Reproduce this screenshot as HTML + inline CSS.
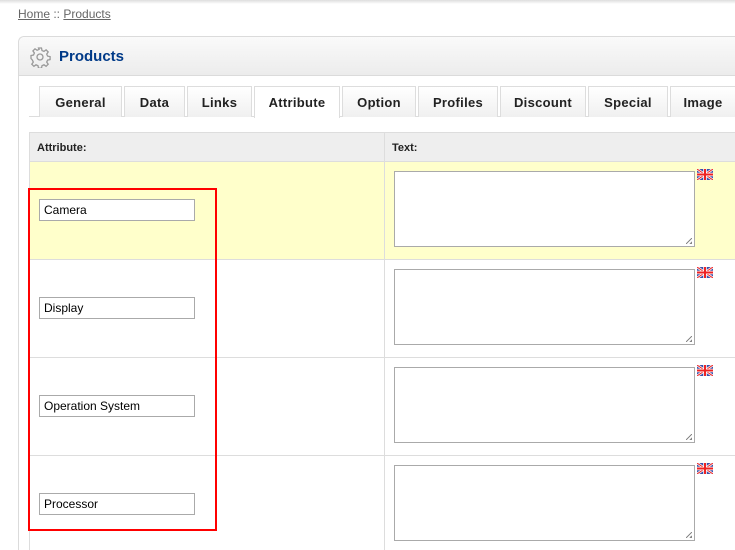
<!DOCTYPE html>
<html><head><meta charset="utf-8"><style>
*{box-sizing:border-box}
html{height:550px;overflow:hidden}
body{margin:0;width:735px;height:550px;overflow:hidden;background:#fff;font-family:"Liberation Sans",Arial,sans-serif;position:relative}
.a{position:absolute}
.bc{left:18px;top:7px;font-size:12px;color:#666}
.bc u{color:#666}
.panel{left:18px;top:36px;width:717px;height:514px;border:1px solid #dbdbdb;border-right:none;border-bottom:none;border-radius:6px 0 0 0}
.head{left:19px;top:37px;width:716px;height:39px;background:linear-gradient(#fafafa,#ececec);border-bottom:1px solid #dbdbdb;border-radius:6px 0 0 0}
.title{left:59px;top:48px;font-size:15px;font-weight:bold;color:#003a88}
.tab{top:86px;height:31px;border:1px solid #ddd;border-bottom:none;background:linear-gradient(#fff,#f0f0f0);font-size:13px;font-weight:bold;color:#222;text-align:center;line-height:31px;letter-spacing:0.3px}
.tab.on{background:#fff;height:32px}
.tline{left:29px;top:116px;width:706px;height:1px;background:#ddd}
.th{left:29px;top:132px;width:706px;height:30px;background:#eee;border:1px solid #ddd;border-right:none;font-size:11px;font-weight:bold;color:#222}
.row{left:29px;width:706px;height:98px;border-left:1px solid #ddd;border-bottom:1px solid #ddd}
.vd{left:384px;top:132px;width:1px;height:418px;background:#ddd}
.in{left:39px;width:156px;height:22px;border:1px solid #aaa;background:#fff;font-size:12px;padding:3px 0 0 4px;color:#000}
.ta{left:394px;width:301px;height:76px;border:1px solid #aaa;background:#fff}
.ta:after{content:"";position:absolute;right:2px;bottom:2px;width:6px;height:6px;background:linear-gradient(135deg,transparent 45%,#888 45%,#888 55%,transparent 55%,transparent 75%,#888 75%)}
.flag{left:697px;width:16px;height:11px}
.red{left:28px;top:188px;width:189px;height:343px;border:2px solid #f00}
</style></head><body>
<div class="a bc"><u>Home</u> :: <u>Products</u></div>
<div class="a panel"></div>
<div class="a head"></div>
<svg class="a" style="left:29px;top:46px" width="22" height="22" viewBox="0 0 22 22"><g fill="none" stroke="#999" stroke-width="1.3"><circle cx="11" cy="11" r="3"/><path d="M9.5 2h3l.5 2.5 2 .9 2.1-1.5 2.1 2.1-1.5 2.1.9 2 2.5.5v3l-2.5.5-.9 2 1.5 2.1-2.1 2.1-2.1-1.5-2 .9-.5 2.5h-3l-.5-2.5-2-.9-2.1 1.5-2.1-2.1 1.5-2.1-.9-2L2 12.5v-3l2.5-.5.9-2-1.5-2.1 2.1-2.1 2.1 1.5 2-.9z"/></g></svg>
<div class="a title">Products</div>
<div class="a tline"></div>
<div class="a tab" style="left:39px;width:83px">General</div>
<div class="a tab" style="left:124px;width:61px">Data</div>
<div class="a tab" style="left:187px;width:65px">Links</div>
<div class="a tab on" style="left:254px;width:86px">Attribute</div>
<div class="a tab" style="left:342px;width:74px">Option</div>
<div class="a tab" style="left:418px;width:80px">Profiles</div>
<div class="a tab" style="left:500px;width:86px">Discount</div>
<div class="a tab" style="left:588px;width:80px">Special</div>
<div class="a tab" style="left:670px;width:65px;border-right:none">Image</div>
<div class="a th"><span class="a" style="left:7px;top:9px">Attribute:</span><span class="a" style="left:362px;top:9px">Text:</span></div>
<div class="a row" style="top:162px;background:#ffffcb"></div>
<div class="a row" style="top:260px"></div>
<div class="a row" style="top:358px"></div>
<div class="a row" style="top:456px;height:94px;border-bottom:none"></div>
<div class="a vd"></div>
<div class="a in" style="top:199px">Camera</div>
<div class="a in" style="top:297px">Display</div>
<div class="a in" style="top:395px">Operation System</div>
<div class="a in" style="top:493px">Processor</div>
<div class="a ta" style="top:171px"></div>
<div class="a ta" style="top:269px"></div>
<div class="a ta" style="top:367px"></div>
<div class="a ta" style="top:465px"></div>
<svg class="a flag" style="top:169px" viewBox="0 0 16 11"><rect width="16" height="11" fill="#3b4fa8"/><path d="M0 0L16 11M16 0L0 11" stroke="#fff" stroke-width="2.5"/><path d="M0 0L16 11M16 0L0 11" stroke="#e22" stroke-width="1"/><path d="M8 0v11M0 5.5h16" stroke="#fff" stroke-width="3.5"/><path d="M8 0v11M0 5.5h16" stroke="#e22" stroke-width="2"/></svg>
<svg class="a flag" style="top:267px" viewBox="0 0 16 11"><rect width="16" height="11" fill="#3b4fa8"/><path d="M0 0L16 11M16 0L0 11" stroke="#fff" stroke-width="2.5"/><path d="M0 0L16 11M16 0L0 11" stroke="#e22" stroke-width="1"/><path d="M8 0v11M0 5.5h16" stroke="#fff" stroke-width="3.5"/><path d="M8 0v11M0 5.5h16" stroke="#e22" stroke-width="2"/></svg>
<svg class="a flag" style="top:365px" viewBox="0 0 16 11"><rect width="16" height="11" fill="#3b4fa8"/><path d="M0 0L16 11M16 0L0 11" stroke="#fff" stroke-width="2.5"/><path d="M0 0L16 11M16 0L0 11" stroke="#e22" stroke-width="1"/><path d="M8 0v11M0 5.5h16" stroke="#fff" stroke-width="3.5"/><path d="M8 0v11M0 5.5h16" stroke="#e22" stroke-width="2"/></svg>
<svg class="a flag" style="top:463px" viewBox="0 0 16 11"><rect width="16" height="11" fill="#3b4fa8"/><path d="M0 0L16 11M16 0L0 11" stroke="#fff" stroke-width="2.5"/><path d="M0 0L16 11M16 0L0 11" stroke="#e22" stroke-width="1"/><path d="M8 0v11M0 5.5h16" stroke="#fff" stroke-width="3.5"/><path d="M8 0v11M0 5.5h16" stroke="#e22" stroke-width="2"/></svg>
<div class="a red"></div>
<div class="a" style="left:0;top:0;width:735px;height:4px;background:linear-gradient(#ddd,#fff)"></div>
</body></html>
